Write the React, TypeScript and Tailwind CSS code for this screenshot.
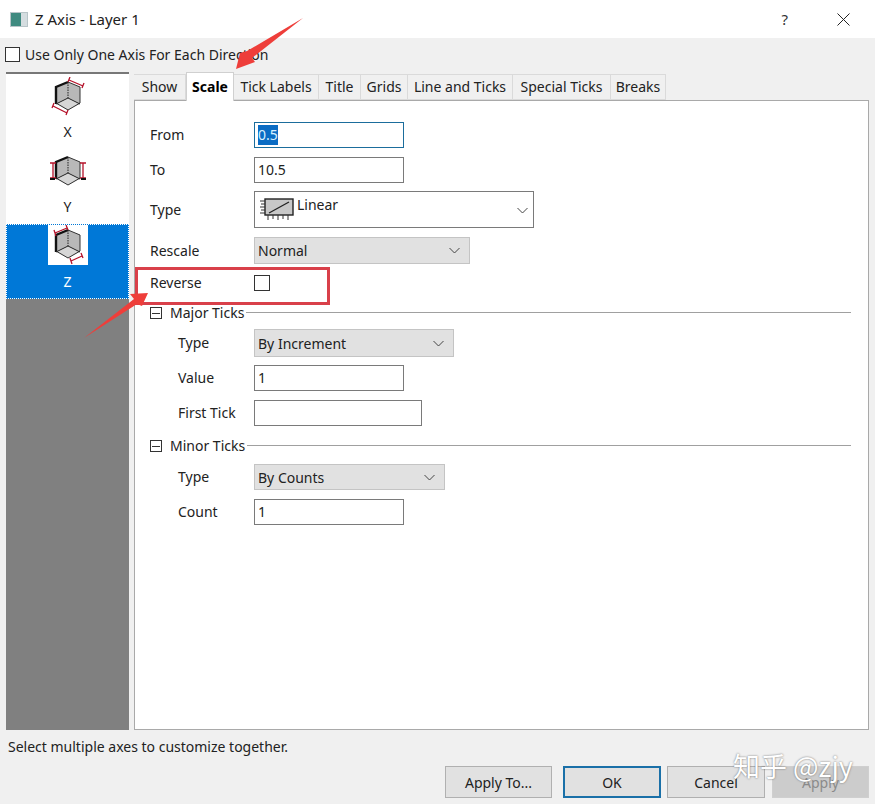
import React from "react";

const FONT = "[font-family:'Noto_Sans','Open_Sans',sans-serif]";

const Chevron = () => (
  <svg width="11" height="7" viewBox="0 0 11 7" className="shrink-0">
    <path d="M0.5 1 L5.5 6 L10.5 1" fill="none" stroke="#444" strokeWidth="1" />
  </svg>
);

const Cube = ({ axis }: { axis: "x" | "y" | "z" }) => (
  <svg width="40" height="40" viewBox="0 0 40 40">
    <path d="M20 5 L32 10 L32 26 L20 33 L8 26 L8 10 Z" fill="#b8b8b8" />
    <path d="M8 27 L20 21 L32 27 L20 33 Z" fill="#d6d6d6" />
    <path d="M20 5 L8 10 L8 27" fill="none" stroke="#111" strokeWidth="2.4" />
    <path d="M20 5 L32 10 L32 26 L20 33 L8 26" fill="none" stroke="#333" strokeWidth="1" />
    <path d="M20 5 L20 21" stroke="#222" strokeWidth="1" strokeDasharray="1.5 1" />
    <path d="M20 21 L8 27 M20 21 L32 27" stroke="#222" strokeWidth="1" />
    {axis === "x" && (
      <g stroke="#b5122a" strokeWidth="1.3" fill="none">
        <path d="M21 3 L35 9 M22 0 L20 5 M36 6 L34 11" />
        <path d="M5 29 L19 36 M6 26 L4 31 M20 33 L18 38" />
      </g>
    )}
    {axis === "y" && (
      <g stroke="#b5122a" strokeWidth="1.3" fill="none">
        <path d="M5 11 L5 26 M2 11 L8 11 M2 26 L8 26" />
        <path d="M35 11 L35 26 M32 11 L38 11 M32 26 L38 26" />
        <path d="M2 27 L7 27 M33 27 L38 27" stroke="#111" strokeWidth="2" />
      </g>
    )}
    {axis === "z" && (
      <g stroke="#b5122a" strokeWidth="1.3" fill="none">
        <path d="M7 8 L19 3 M6 5 L8 11 M18 0 L20 5" />
        <path d="M23 36 L34 31 M22 33 L24 39 M33 28 L35 33" />
      </g>
    )}
  </svg>
);

const AxisItem = ({ axis, label, selected }: { axis: "x" | "y" | "z"; label: string; selected?: boolean }) => (
  <div
    className={
      selected
        ? "h-[75px] flex flex-col items-center bg-[#0078d7] border border-dotted border-white text-white"
        : "h-[75px] flex flex-col items-center bg-white text-[#222]"
    }
  >
    <div className={selected ? "w-[40px] h-[40px] bg-white" : "w-[40px] h-[40px] mt-[3px]"}>
      <Cube axis={axis} />
    </div>
    <div className={selected ? "mt-[7px] text-[14px] leading-[20px]" : "mt-[5px] text-[14px] leading-[20px]"}>{label}</div>
  </div>
);

const tabs = [
  { name: "Show", w: "w-[52px]" },
  { name: "Scale", w: "w-[48px]", active: true },
  { name: "Tick Labels", w: "w-[85px]" },
  { name: "Title", w: "w-[42px]" },
  { name: "Grids", w: "w-[47px]" },
  { name: "Line and Ticks", w: "w-[105px]" },
  { name: "Special Ticks", w: "w-[98px]" },
  { name: "Breaks", w: "w-[55px]" },
];

const Row = ({ label, indent, mt, children }: { label: string; indent?: boolean; mt: string; children: React.ReactNode }) => (
  <div className={`flex items-center ${mt}`}>
    <div className={indent ? "w-[76px] ml-[28px] shrink-0 leading-[16px]" : "w-[104px] shrink-0 leading-[16px]"}>{label}</div>
    {children}
  </div>
);

const Field = ({ value, w }: { value?: string; w: string }) => (
  <div className={`${w} h-[26px] border border-[#7a7a7a] bg-white px-[3px] leading-[24px]`}>{value}</div>
);

const Select = ({ value, w, h }: { value: string; w: string; h: string }) => (
  <div className={`${w} ${h} bg-[#e1e1e1] border border-[#c4c4c4] flex items-center justify-between pl-[3px] pr-[9px]`}>
    <span>{value}</span>
    <Chevron />
  </div>
);

const Heading = ({ label, mt }: { label: string; mt: string }) => (
  <div className={`flex items-center h-[16px] leading-[16px] ${mt}`}>
    <div className="w-[12px] h-[12px] border border-[#333] flex items-center justify-center shrink-0">
      <div className="w-[8px] h-px bg-[#333]" />
    </div>
    <span className="ml-[8px] shrink-0">{label}</span>
    <div className="flex-1 h-px bg-[#a0a0a0] ml-[2px] mr-[17px] -mt-[2px]" />
  </div>
);

const Button = ({ label, w, ml, primary, disabled }: { label: string; w: string; ml: string; primary?: boolean; disabled?: boolean }) => (
  <div
    className={`${w} ${ml} h-[32px] flex items-center justify-center ${
      primary
        ? "border-2 border-[#1a70a8] bg-[#e1e1e1] text-[#222]"
        : disabled
        ? "border border-[#cfcfcf] bg-[#cccccc] text-[#8a8a8a]"
        : "border border-[#b0b0b0] bg-[#e1e1e1] text-[#222]"
    }`}
  >
    {label}
  </div>
);

export default function App() {
  return (
    <div className={`relative w-[875px] h-[804px] overflow-hidden bg-[#f0f0f0] text-[14px] text-[#222] ${FONT}`}>
      {/* title bar */}
      <div className="h-[38px] bg-white flex items-center pl-[10px]">
        <div className="w-[18px] h-[15px] bg-[#d5dde0] border border-[#b8c4c8] flex shrink-0">
          <div className="w-[10px] h-full bg-[#3f8a80]" />
        </div>
        <span className="ml-[7px] text-[15px]">Z Axis - Layer 1</span>
        <span className="ml-auto text-[15px] text-[#333]">?</span>
        <svg width="13" height="13" viewBox="0 0 13 13" className="ml-[49px] mr-[25px]">
          <path d="M0.5 0.5 L12.5 12.5 M12.5 0.5 L0.5 12.5" stroke="#222" strokeWidth="1" />
        </svg>
      </div>

      {/* top checkbox */}
      <div className="h-[34px] flex items-center pl-[5px] pb-[2px]">
        <div className="w-[15px] h-[15px] border border-[#333] bg-white" />
        <span className="ml-[5px]">Use Only One Axis For Each Direction</span>
      </div>

      <div className="flex h-[658px] pl-[6px]">
        {/* axis list */}
        <div className="w-[123px] h-full bg-[#808080] border-t-2 border-t-[#777]">
          <AxisItem axis="x" label="X" />
          <AxisItem axis="y" label="Y" />
          <AxisItem axis="z" label="Z" selected />
        </div>

        {/* tabs and panel */}
        <div className="w-[735px] ml-[5px] flex flex-col">
          <div className="flex items-end h-[28px] shrink-0">
            {tabs.map((t) =>
              t.active ? (
                <div
                  key={t.name}
                  className={`${t.w} h-[29px] -mb-px pb-[2px] z-10 bg-white border border-b-0 border-[#d0d0d0] flex items-center justify-center font-bold text-black`}
                >
                  {t.name}
                </div>
              ) : (
                <div
                  key={t.name}
                  className={`${t.w} h-[26px] pb-[2px] bg-[#f0f0f0] border border-l-0 border-[#dadada] flex items-center justify-center`}
                >
                  {t.name}
                </div>
              )
            )}
          </div>
          <div className="flex-1 bg-white border border-[#a9a9a9] pl-[15px]">
            <Row label="From" mt="mt-[21px]">
              <div className="w-[150px] h-[26px] border border-[#1b6d9c] bg-white px-[3px] flex items-center">
                <span className="bg-[#0a6cc4] text-[#d8f0ff] leading-[20px]">0.5</span>
              </div>
            </Row>
            <Row label="To" mt="mt-[9px]">
              <Field value="10.5" w="w-[150px]" />
            </Row>
            <Row label="Type" mt="mt-[8px]">
              <div className="w-[280px] h-[37px] border border-[#7a7a7a] bg-white flex items-start justify-between pr-[5px]">
                <div className="flex items-start pl-[5px] pt-[3px]">
                  <svg width="34" height="24" viewBox="0 0 34 24" className="mt-[2px]">
                    <rect x="5" y="2" width="28" height="16" fill="#c8c8c8" stroke="#222" strokeWidth="1.4" />
                    <path d="M9 16 L29 5" stroke="#222" strokeWidth="1.3" />
                    <path d="M0 4 H5 M1 7 H5 M0 10 H5 M1 13 H5 M0 16 H5 M8 18 V23 M13 18 V22 M18 18 V23 M23 18 V22 M28 18 V23" stroke="#333" strokeWidth="1" />
                  </svg>
                  <span className="ml-[3px] leading-[20px]">Linear</span>
                </div>
                <div className="mt-[15px]">
                  <Chevron />
                </div>
              </div>
            </Row>
            <Row label="Rescale" mt="mt-[9px]">
              <Select value="Normal" w="w-[216px]" h="h-[27px]" />
            </Row>
            <Row label="Reverse" mt="mt-[11px]">
              <div className="w-[16px] h-[16px] border border-[#333] bg-white" />
            </Row>
            <Heading label="Major Ticks" mt="mt-[14px]" />
            <Row label="Type" indent mt="mt-[8px]">
              <Select value="By Increment" w="w-[200px]" h="h-[28px]" />
            </Row>
            <Row label="Value" indent mt="mt-[8px]">
              <Field value="1" w="w-[150px]" />
            </Row>
            <Row label="First Tick" indent mt="mt-[9px]">
              <Field w="w-[168px]" />
            </Row>
            <Heading label="Minor Ticks" mt="mt-[12px]" />
            <Row label="Type" indent mt="mt-[10px]">
              <Select value="By Counts" w="w-[191px]" h="h-[26px]" />
            </Row>
            <Row label="Count" indent mt="mt-[9px]">
              <Field value="1" w="w-[150px]" />
            </Row>
          </div>
        </div>
      </div>

      {/* status and buttons */}
      <div className="pl-[8px] mt-[7px] leading-[19px]">Select multiple axes to customize together.</div>
      <div className="flex mt-[10px] pl-[445px]">
        <Button label="Apply To..." w="w-[107px]" ml="ml-0" />
        <Button label="OK" w="w-[98px]" ml="ml-[11px]" primary />
        <Button label="Cancel" w="w-[98px]" ml="ml-[6px]" />
        <Button label="Apply" w="w-[97px]" ml="ml-[7px]" disabled />
      </div>

      {/* annotations drawn over the dialog */}
      <div className="absolute left-[135px] top-[267px] w-[195px] h-[38px] border-[3px] border-[#d9404a]" />
      <svg className="absolute left-0 top-0 pointer-events-none" width="875" height="804" viewBox="0 0 875 804">
        <polygon points="303,18 247,51 240,53 236,69 255,62 252,58" fill="#ee3e3a" />
        <polygon points="148,293 130,294 134,299 84,338 137,304 142,306" fill="#ee3e3a" />
      </svg>
      <div className="absolute left-[733px] top-[749px] text-[27px] leading-[34px] text-white [font-family:'Noto_Sans_CJK_SC','Noto_Sans',sans-serif] [text-shadow:0_0_2px_#666]">
        知乎 @zjy
      </div>
    </div>
  );
}
